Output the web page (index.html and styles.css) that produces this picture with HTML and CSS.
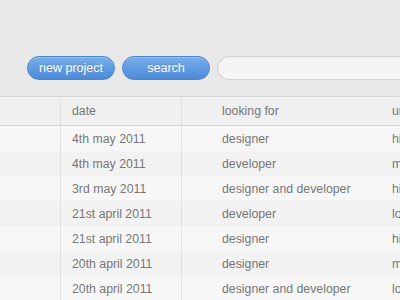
FILE: index.html
```html
<!DOCTYPE html>
<html lang="en">
<head>
    <meta charset="UTF-8">
    <title>Projects</title>
    <link rel="stylesheet" href="styles.css">
</head>
<body>
    <div class="toolbar">
        <button class="btn">new project</button>
        <button class="btn">search</button>
        <input type="text" class="search-field">
    </div>

    <table class="projects">
        <thead>
            <tr>
                <th class="col-id"></th>
                <th class="col-date">date</th>
                <th class="col-role">looking for</th>
                <th class="col-urgency">urgency</th>
            </tr>
        </thead>
        <tbody>
            <tr><td class="col-id"></td><td class="col-date">4th may 2011</td><td class="col-role">designer</td><td class="col-urgency">high</td></tr>
            <tr><td class="col-id"></td><td class="col-date">4th may 2011</td><td class="col-role">developer</td><td class="col-urgency">medium</td></tr>
            <tr><td class="col-id"></td><td class="col-date">3rd may 2011</td><td class="col-role">designer and developer</td><td class="col-urgency">high</td></tr>
            <tr><td class="col-id"></td><td class="col-date">21st april 2011</td><td class="col-role">developer</td><td class="col-urgency">low</td></tr>
            <tr><td class="col-id"></td><td class="col-date">21st april 2011</td><td class="col-role">designer</td><td class="col-urgency">high</td></tr>
            <tr><td class="col-id"></td><td class="col-date">20th april 2011</td><td class="col-role">designer</td><td class="col-urgency">medium</td></tr>
            <tr><td class="col-id"></td><td class="col-date">20th april 2011</td><td class="col-role">designer and developer</td><td class="col-urgency">low</td></tr>
        </tbody>
    </table>
</body>
</html>
```

FILE: styles.css
```css
body {
    margin: 0;
    overflow: hidden;
    font-family: 'Liberation Sans', Arial, sans-serif;
    background-color: #e8e8e8;
    color: #777777;
}

.toolbar {
    display: flex;
    align-items: center;
    gap: 7px;
    padding: 56px 0 16px 27px;
    width: 600px;
}

.btn {
    width: 88px;
    height: 24px;
    padding: 0;
    border: 1px solid #4a85cf;
    border-radius: 12px;
    background: linear-gradient(#78aeeb, #4c8ad9);
    box-shadow: inset 0 1px 0 rgba(255, 255, 255, 0.25);
    color: #ffffff;
    font-family: inherit;
    font-size: 12.5px;
    text-shadow: 0 -1px 0 rgba(0, 0, 0, 0.15);
}

.search-field {
    width: 260px;
    height: 24px;
    box-sizing: border-box;
    border: 1px solid #d2d2d2;
    border-radius: 12px;
    background: #f5f5f5;
    box-shadow: inset 0 1px 1px rgba(0, 0, 0, 0.04);
    outline: none;
}

.projects {
    width: 480px;
    table-layout: fixed;
    border-collapse: collapse;
    border-top: 1px solid #d5d5d5;
    font-size: 12.3px;
}

.projects th {
    height: 28px;
    padding: 0;
    text-align: left;
    font-weight: normal;
    background: #f0f0f0;
    border-bottom: 1px solid #d5d5d5;
    box-shadow: inset 0 1px 0 #f6f6f6;
}

.projects td {
    height: 25px;
    padding: 0;
    background: #f7f7f7;
}

.projects tbody tr:nth-child(even) td {
    background: #f2f2f2;
}

.col-id {
    width: 60px;
    border-right: 1px solid #e2e2e2;
}

.col-date {
    width: 109px;
    padding-left: 11px !important;
    border-right: 1px solid #e2e2e2;
}

.col-role {
    width: 170px;
    padding-left: 40px !important;
}
```
